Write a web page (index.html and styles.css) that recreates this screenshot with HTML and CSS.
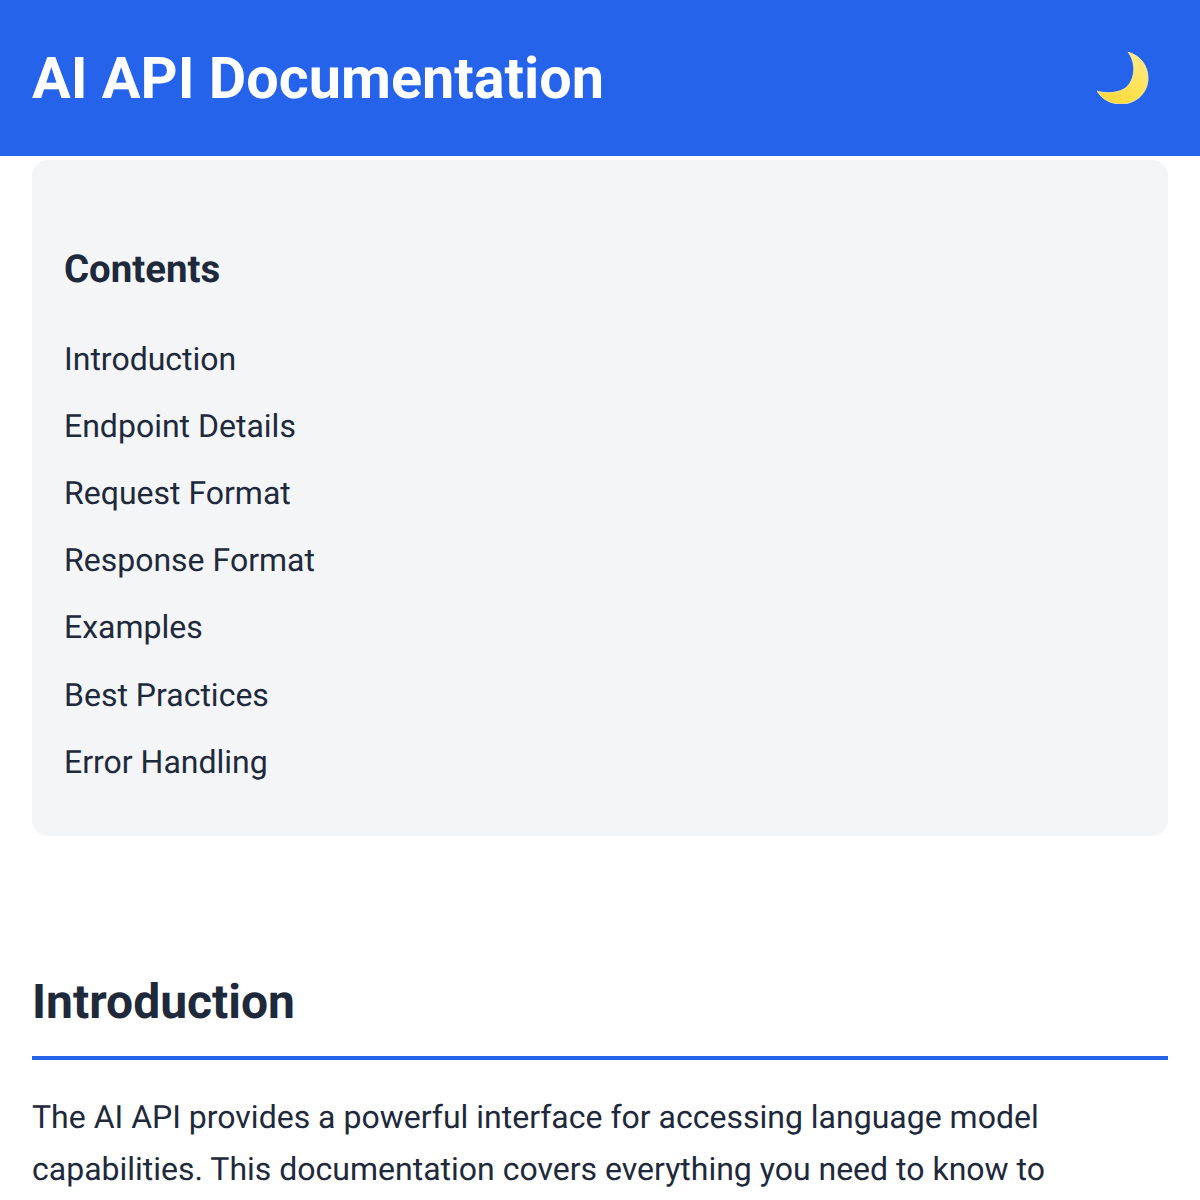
FILE: index.html
```html
<!DOCTYPE html>
<html lang="en">
<head>
    <meta charset="UTF-8">
    <meta name="viewport" content="width=device-width, initial-scale=1.0">
    <title>AI API Documentation</title>
    <link rel="stylesheet" href="styles.css">
</head>
<body>
    <header class="header">
        <h1>AI API Documentation</h1>
        <button class="theme-toggle" aria-label="Toggle theme">
            <svg class="moon" viewBox="0 0 52 52" width="52" height="52">
                <defs>
                    <linearGradient id="moon-fill" x1="0.85" y1="0.1" x2="0.35" y2="1">
                        <stop offset="0" stop-color="#ffe97f"/>
                        <stop offset="0.6" stop-color="#ffe253"/>
                        <stop offset="1" stop-color="#fbd93f"/>
                    </linearGradient>
                </defs>
                <path d="M31 0C44 4 51 14 51 26C51 41 39 52 24 52C13 52 5 47 0 39C6 41 18 42 27 37C37 31 41 13 31 0Z" fill="url(#moon-fill)" stroke="#fff3a8" stroke-width="0.8" stroke-linejoin="round"/>
            </svg>
        </button>
    </header>
    <div class="container">
        <nav class="toc">
            <h3>Contents</h3>
            <ul>
                <li><a href="#introduction">Introduction</a></li>
                <li><a href="#endpoint">Endpoint Details</a></li>
                <li><a href="#request">Request Format</a></li>
                <li><a href="#response">Response Format</a></li>
                <li><a href="#examples">Examples</a></li>
                <li><a href="#practices">Best Practices</a></li>
                <li><a href="#errors">Error Handling</a></li>
            </ul>
        </nav>
        <section id="introduction" class="section">
            <h2>Introduction</h2>
            <p>The AI API provides a powerful interface for accessing language model capabilities. This documentation covers everything you need to know to integrate the API into your applications.</p>
        </section>
    </div>
</body>
</html>
```

FILE: styles.css
```css
* {
    box-sizing: border-box;
}
html, body {
    height: 1200px;
    overflow: hidden;
}
body {
    margin: 0;
    padding: 0;
    font-family: Roboto, sans-serif;
    font-size: 32px;
    line-height: 1.6;
    text-rendering: geometricPrecision;
    color: #1e293b;
    background-color: #ffffff;
}
.header {
    height: 156px;
    padding: 0 32px;
    background-color: #2563eb;
    color: #ffffff;
    display: flex;
    justify-content: space-between;
    align-items: center;
}
.header h1 {
    margin: 0;
    padding-top: 4px;
    font-size: 57.6px;
    font-weight: 700;
}
.theme-toggle {
    padding: 0 19px 0 16px;
    border: none;
    background: none;
    cursor: pointer;
}
.moon {
    display: block;
}
.container {
    padding: 4px 32px 0;
}
.toc {
    padding: 32px;
    background-color: #f3f5f7;
    border-radius: 16px;
}
.toc h3 {
    margin: 47px 0 33.2px;
    font-size: 38.4px;
    font-weight: 700;
}
.toc ul {
    margin: 0;
    padding: 0;
    list-style: none;
}
.toc li {
    margin-bottom: 16px;
}
.toc a {
    color: #1e293b;
    text-decoration: none;
}
.section {
    margin-top: 128px;
}
.section h2 {
    margin: 0 0 31px;
    padding-bottom: 15.5px;
    font-size: 48px;
    font-weight: 700;
    border-bottom: 4px solid #2563eb;
}
.section p {
    margin: 0;
    line-height: 52px;
}
```
